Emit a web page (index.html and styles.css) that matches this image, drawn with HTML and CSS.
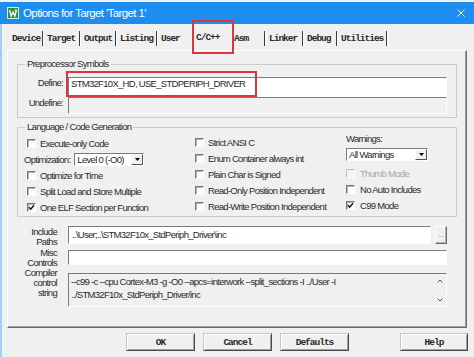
FILE: index.html
```html
<!DOCTYPE html>
<html>
<head>
<meta charset="utf-8">
<title>Options for Target 'Target 1'</title>
<link rel="stylesheet" href="styles.css">
</head>
<body>
<div class="window">
  <div class="titlebar">
    <svg class="appicon" width="12" height="12" viewBox="0 0 12 12">
      <rect x="0.5" y="0.5" width="11" height="11" fill="#2f8f3a" stroke="#d6ecd6"/>
      <path d="M2.5 3 L4.2 9 L6 5 L7.8 9 L9.5 3" fill="none" stroke="#fff" stroke-width="1.3"/>
      <rect x="7.6" y="2.2" width="2" height="2" fill="#f2d34a"/>
    </svg>
    <span class="title">Options for Target 'Target 1'</span>
    <svg class="close" width="8" height="8" viewBox="0 0 8 8">
      <path d="M0.5 0.5 L7.5 7.5 M7.5 0.5 L0.5 7.5" stroke="#fff" stroke-width="1"/>
    </svg>
  </div>
  <div class="frame">
    <div class="tabs">
      <div class="tab">Device</div>
      <div class="tab">Target</div>
      <div class="tab">Output</div>
      <div class="tab">Listing</div>
      <div class="tab nosep">User</div>
      <div class="tab active">C/C++</div>
      <div class="tab">Asm</div>
      <div class="tab">Linker</div>
      <div class="tab">Debug</div>
      <div class="tab">Utilities</div>
    </div>
    <div class="panel">
      <fieldset class="group pre">
        <legend>Preprocessor Symbols</legend>
        <div class="sym-grid">
          <div class="rlabel">Define:</div>
          <div class="field define"><span>STM32F10X_HD, USE_STDPERIPH_DRIVER</span><i class="mark"></i></div>
          <div class="rlabel">Undefine:</div>
          <div class="field undefine"></div>
        </div>
      </fieldset>
      <fieldset class="group lang">
        <legend>Language / Code Generation</legend>
        <div class="lang-grid">
          <div class="col">
            <div class="row"><span class="cb"></span>Execute-only Code</div>
            <div class="row">
              <span class="optlabel">Optimization:</span>
              <div class="select opt"><span class="val">Level 0 (-O0)</span><span class="dd"><svg width="5" height="3" viewBox="0 0 5 3"><path d="M0 0H5L2.5 3Z" fill="#000"/></svg></span></div>
            </div>
            <div class="row"><span class="cb"></span>Optimize for Time</div>
            <div class="row"><span class="cb"></span>Split Load and Store Multiple</div>
            <div class="row"><span class="cb"><svg width="7" height="7" viewBox="0 0 7 7"><path d="M1 3.2 L2.7 5.2 L6 1.2" fill="none" stroke="#111" stroke-width="1.4"/></svg></span>One ELF Section per Function</div>
          </div>
          <div class="col mid">
            <div class="row"><span class="cb"></span>Strict ANSI C</div>
            <div class="row"><span class="cb"></span>Enum Container always int</div>
            <div class="row"><span class="cb"></span>Plain Char is Signed</div>
            <div class="row"><span class="cb"></span>Read-Only Position Independent</div>
            <div class="row"><span class="cb"></span>Read-Write Position Independent</div>
          </div>
          <div class="col right">
            <div class="warn-label">Warnings:</div>
            <div class="select warn"><span class="val">All Warnings</span><span class="dd"><svg width="5" height="3" viewBox="0 0 5 3"><path d="M0 0H5L2.5 3Z" fill="#000"/></svg></span></div>
            <div class="row first disabled"><span class="cb"></span>Thumb Mode</div>
            <div class="row"><span class="cb"></span>No Auto Includes</div>
            <div class="row"><span class="cb"><svg width="7" height="7" viewBox="0 0 7 7"><path d="M1 3.2 L2.7 5.2 L6 1.2" fill="none" stroke="#111" stroke-width="1.4"/></svg></span>C99 Mode</div>
          </div>
        </div>
      </fieldset>
      <div class="paths">
        <div class="plabel a">Include<br>Paths</div>
        <div class="incrow">
          <div class="field inc">..\User;..\STM32F10x_StdPeriph_Driver\inc</div>
          <div class="browse">...</div>
        </div>
        <div class="plabel b">Misc<br>Controls</div>
        <div class="field misc"></div>
        <div class="plabel c">Compiler<br>control<br>string</div>
        <div class="cbox">
          <div class="ctext">--c99 -c --cpu Cortex-M3 -g -O0 --apcs=interwork --split_sections -I ../User -I<br>../STM32F10x_StdPeriph_Driver/inc</div>
          <div class="scroll">
            <svg width="6" height="4" viewBox="0 0 6 4"><path d="M0.5 3.5 L3 1 L5.5 3.5" fill="none" stroke="#555" stroke-width="1"/></svg>
            <svg width="6" height="4" viewBox="0 0 6 4"><path d="M0.5 0.5 L3 3 L5.5 0.5" fill="none" stroke="#555" stroke-width="1"/></svg>
          </div>
        </div>
      </div>
    </div>
    <div class="buttons">
      <div class="button">OK</div>
      <div class="button">Cancel</div>
      <div class="button">Defaults</div>
      <div class="button help">Help</div>
    </div>
  </div>
</div>
</body>
</html>
```

FILE: styles.css
```css
* { box-sizing: border-box; }
html, body { margin: 0; padding: 0; }
body {
  width: 474px;
  height: 357px;
  overflow: hidden;
  background: #f0f0f0;
  font-family: "Liberation Sans", Arial, sans-serif;
  font-size: 9.5px;
  letter-spacing: -0.7px;
  color: #2a2a2a;
}
.window {
  height: 357px;
  display: flex;
  flex-direction: column;
  padding-top: 2px;
  background: #eef3f8;
}
.titlebar {
  height: 22px;
  flex: none;
  background: #1d8df0;
  display: flex;
  align-items: center;
  padding-left: 7px;
  color: #fff;
}
.appicon { flex: none; }
.title {
  margin-left: 4px;
  font-size: 11.5px;
  letter-spacing: -0.6px;
}
.close { margin-left: auto; margin-right: 9px; }

.frame {
  flex: 1;
  background: #f0f0f0;
  border-left: 2px solid #a3cdf2;
  display: flex;
  flex-direction: column;
}

.tabs {
  height: 26px;
  flex: none;
  display: grid;
  grid-template-columns: 35px 37px 36px 41px 35px 38px 35px 38px 34px 50px;
  padding-left: 6px;
  font-family: "Liberation Mono", monospace;
  font-weight: bold;
  font-size: 9.5px;
  letter-spacing: -1px;
  color: #2a2a2a;
}
.tab {
  position: relative;
  padding: 2px 0 0 4px;
  display: flex;
  align-items: center;
  white-space: nowrap;
}
.tab::after {
  content: "";
  position: absolute;
  right: 0;
  top: 7px;
  height: 15px;
  width: 1px;
  background: #3a3a3a;
  box-shadow: 1px 0 #fff;
}
.tab.nosep::after, .tab.active::after { display: none; }
.tab.active { padding-top: 0; padding-left: 4px; }
.tab.active::before {
  content: "";
  position: absolute;
  left: 0;
  top: -4px;
  width: 38px;
  height: 30px;
  border: 2px solid #d9363e;
}

.panel {
  margin: 0 7px 0 5px;
  height: 278px;
  flex: none;
  border: 1px solid;
  border-color: #fff #6b6b6b #6b6b6b #fff;
  box-shadow: inset -1px -1px #a0a0a0;
  padding: 0 9px;
  display: flex;
  flex-direction: column;
}

.group {
  border: 1px solid #cbcbcb;
  margin: 0;
  padding: 0;
  min-width: 0;
}
.group legend {
  margin-left: 7px;
  padding: 0 2px;
  line-height: 12px;
}
.pre { margin-top: 7px; }
.lang { margin-top: 3px; }

.sym-grid {
  display: grid;
  grid-template-columns: 45px 1fr;
  column-gap: 5px;
  padding: 7px 9px 3px 0;
  align-items: start;
}
.rlabel { text-align: right; line-height: 12px; }

.field {
  position: relative;
  background: #fff;
  border: 1px solid;
  border-color: #7a7a7a #fff #fff #7a7a7a;
  padding: 0 2px;
  line-height: 11px;
  white-space: nowrap;
}
.define { height: 20px; }
.undefine { height: 17px; background: #f0f0f0; }
.mark {
  position: absolute;
  left: -3px;
  top: -7px;
  width: 191px;
  height: 26px;
  border: 2px solid #d9363e;
}

.lang-grid {
  display: grid;
  grid-template-columns: 168px 151px 1fr;
  padding: 2px 0 1px 9px;
}
.col { display: flex; flex-direction: column; }
.mid { margin-top: -1px; }
.row {
  height: 16px;
  display: flex;
  align-items: center;
  white-space: nowrap;
}
.cb {
  width: 9px;
  height: 9px;
  flex: none;
  margin-right: 4px;
  background: #fbfbfb;
  border: 1px solid;
  border-color: #777 #fff #fff #777;
  box-shadow: inset 1px 1px #b5b5b5;
  display: flex;
  align-items: center;
  justify-content: center;
}
.right .cb { margin-right: 5px; }
.row.disabled { color: #a6a6a6; }
.row.disabled .cb { border-color: #bdbdbd #fff #fff #bdbdbd; box-shadow: none; background: #f4f4f4; }
.optlabel { margin-left: -3px; margin-right: 4px; }

.select {
  display: flex;
  background: #fff;
  border: 1px solid;
  border-color: #7a7a7a #fff #fff #7a7a7a;
  height: 13px;
  line-height: 11px;
  white-space: nowrap;
}
.select .val { flex: 1; padding-left: 2px; }
.select .dd {
  width: 12px;
  flex: none;
  background: #f0f0f0;
  border: 1px solid;
  border-color: #fff #505050 #505050 #fff;
  display: flex;
  align-items: center;
  justify-content: center;
}
.opt { width: 70px; }
.warn { width: 82px; margin-top: 4px; }
.warn-label { line-height: 11px; margin-top: -2px; }
.row.first { margin-top: 4px; }

.paths {
  display: grid;
  grid-template-columns: 40px 1fr;
  grid-template-rows: 21px 21px auto;
  column-gap: 11px;
  row-gap: 1px;
  margin: 9px 10px 0 0;
}
.plabel { text-align: right; line-height: 10px; }
.plabel.a { margin-top: 1px; }
.plabel.c { margin-top: -2px; }
.incrow { display: flex; gap: 4px; height: 18px; }
.inc { flex: 1; height: 18px; padding-top: 1px; line-height: 14px; padding-left: 3px; }
.browse {
  width: 12px;
  height: 18px;
  border: 1px solid;
  border-color: #fff #6a6a6a #6a6a6a #fff;
  box-shadow: inset -1px -1px #b0b0b0;
  font-size: 7px;
  letter-spacing: 0;
  color: #666;
  display: flex;
  align-items: center;
  justify-content: center;
  padding-bottom: 2px;
}
.misc { height: 15px; margin-top: 2px; }
.cbox {
  margin-top: 3px;
  height: 34px;
  display: flex;
  border: 1px solid;
  border-color: #7a7a7a #fff #fff #7a7a7a;
  background: #f0f0f0;
}
.ctext {
  flex: 1;
  padding: 1px 0 0 2px;
  line-height: 13px;
  white-space: nowrap;
  overflow: hidden;
}
.scroll {
  width: 12px;
  flex: none;
  display: flex;
  flex-direction: column;
  justify-content: space-between;
  align-items: center;
  padding: 5px 0 4px;
}

.buttons {
  display: flex;
  gap: 8px;
  margin-top: 5px;
  padding: 0 6px 0 124px;
  font-family: "Liberation Mono", monospace;
  font-weight: bold;
  font-size: 9.5px;
  letter-spacing: -1px;
  color: #2a2a2a;
}
.button {
  width: 69px;
  height: 18px;
  border: 1px solid;
  border-color: #c4c4c4 #4a4a4a #4a4a4a #c4c4c4;
  box-shadow: inset 1px 1px #fff, inset -1px -1px #a0a0a0;
  display: flex;
  align-items: center;
  justify-content: center;
}
.help { margin-left: auto; width: 68px; }
```
